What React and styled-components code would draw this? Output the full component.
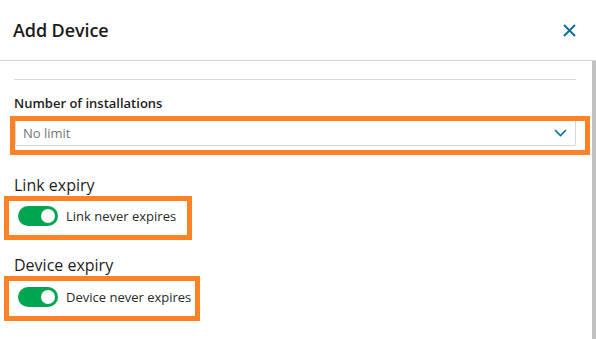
import React from "react";
import styled, { createGlobalStyle } from "styled-components";

const Global = createGlobalStyle`
  html, body { margin: 0; padding: 0; background: #fff; }
  body { font-family: "Open Sans", "Noto Sans", sans-serif; overflow: hidden; }
  * { box-sizing: border-box; }
`;

const Modal = styled.div`
  width: 596px;
  height: 339px;
  display: flex;
  flex-direction: column;
  background: #fff;
`;

const Header = styled.div`
  height: 61px;
  flex: none;
  display: flex;
  align-items: center;
  justify-content: space-between;
  padding: 0 20px 0 13px;
  border-bottom: 1px solid #d4d4d4;
`;

const Title = styled.h2`
  margin: 0;
  font-size: 18px;
  font-weight: 600;
  color: #1b1b1b;
  letter-spacing: -0.1px;
`;

const CloseButton = styled.button`
  border: 0;
  background: none;
  padding: 0;
  width: 14px;
  height: 14px;
  display: flex;
  align-items: center;
  justify-content: center;
  cursor: pointer;
`;

const BodyRow = styled.div`
  flex: 1;
  display: flex;
  min-height: 0;
`;

const Content = styled.div`
  flex: 1;
  padding: 18px 16px 0 14px;
`;

const ScrollThumb = styled.div`
  width: 4px;
  flex: none;
  background: #c1c1c1;
`;

const Divider = styled.hr`
  margin: 0;
  border: 0;
  border-top: 1px solid #d8d8d8;
`;

const FieldLabel = styled.div`
  margin-top: 14px;
  font-size: 13px;
  line-height: 18px;
  font-weight: 600;
  color: #1e1e1e;
`;

const Highlight = styled.div`
  border: 5px solid #fd8125;
  background: #fff;
  display: ${(p) => (p.$inline ? "inline-flex" : "flex")};
  align-items: center;
`;

const SelectHighlight = styled(Highlight)`
  margin: 4px -14px 0 -4px;
  padding: 0 9px 4px 0;
`;

const Select = styled.div`
  flex: 1;
  height: 25px;
  display: flex;
  align-items: center;
  justify-content: space-between;
  padding: 0 8px 0 7px;
  border: 1px solid #d6d6d6;
  border-top: 0;
  border-radius: 0 0 2px 2px;
  font-size: 13px;
  color: #757575;
`;

const SectionTitle = styled.div`
  font-size: 16px;
  line-height: 22px;
  color: #1e1e1e;
  margin-top: ${(p) => p.$top}px;
`;

const ToggleHighlight = styled(Highlight)`
  margin-left: -10px;
  padding: ${(p) => p.$pad};
  gap: 8px;
`;

const Track = styled.span`
  width: 40px;
  height: 20px;
  border-radius: 10px;
  background: #00a551;
  display: flex;
  align-items: center;
  justify-content: flex-end;
  padding-right: 3px;
`;

const Knob = styled.span`
  width: 14px;
  height: 14px;
  border-radius: 50%;
  background: #fff;
`;

const ToggleLabel = styled.span`
  font-size: 13px;
  line-height: 20px;
  color: #2a2a2a;
`;

const Toggle = ({ label, pad }) => (
  <ToggleHighlight $inline $pad={pad}>
    <Track>
      <Knob />
    </Track>
    <ToggleLabel>{label}</ToggleLabel>
  </ToggleHighlight>
);

const Wrap = styled.div`
  display: flex;
`;

export default function App() {
  return (
    <Modal>
      <Global />
      <Header>
        <Title>Add Device</Title>
        <CloseButton aria-label="Close">
          <svg width="13" height="13" viewBox="0 0 13 13">
            <path d="M1 1L12 12M12 1L1 12" stroke="#0b6fa4" strokeWidth="2" />
          </svg>
        </CloseButton>
      </Header>
      <BodyRow>
        <Content>
          <Divider />
          <FieldLabel>Number of installations</FieldLabel>
          <SelectHighlight>
            <Select>
              <span>No limit</span>
              <svg width="13" height="8" viewBox="0 0 13 8">
                <path d="M1 1L6.5 6.5L12 1" stroke="#0b6fa4" strokeWidth="1.7" fill="none" />
              </svg>
            </Select>
          </SelectHighlight>
          <SectionTitle $top={19}>Link expiry</SectionTitle>
          <Wrap>
            <Toggle label="Link never expires" pad="5px 11px 9px 9px" />
          </Wrap>
          <SectionTitle $top={14}>Device expiry</SectionTitle>
          <Wrap>
            <Toggle label="Device never expires" pad="6px 4px 9px 9px" />
          </Wrap>
        </Content>
        <ScrollThumb />
      </BodyRow>
    </Modal>
  );
}
